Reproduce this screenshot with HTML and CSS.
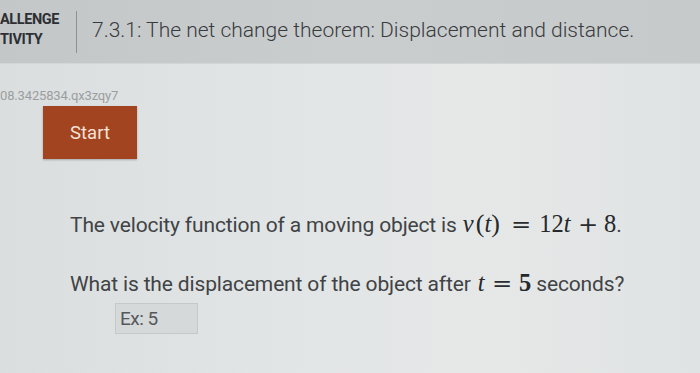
FILE: index.html
```html
<!DOCTYPE html>
<html>
<head>
<meta charset="utf-8">
<link rel="stylesheet" href="styles.css">
</head>
<body>
<header class="top">
  <div class="kind"><span>ALLENGE</span><span>TIVITY</span></div>
  <div class="divider"></div>
  <h1 class="title">7.3.1: The net change theorem: Displacement and distance.</h1>
</header>
<main class="content">
  <div class="code">08.3425834.qx3zqy7</div>
  <button class="start">Start</button>
  <p class="q q1">The velocity function of a moving object is <span class="m"><i class="v">v</i><span class="p">(</span><i>t</i><span class="p">)</span></span><span class="rel">=</span><span class="m">12<i>t</i></span><span class="op">+</span><span class="m">8</span>.</p>
  <p class="q q2">What is the displacement of the object after <span class="m t"><i>t</i></span><span class="rel">=</span><span class="m b">5</span> seconds?</p>
  <div class="answer">Ex: 5</div>
</main>
</body>
</html>
```
FILE: styles.css
```css
html, body { margin: 0; padding: 0; }
body {
  width: 700px; height: 373px; overflow: hidden;
  font-family: Roboto, "Liberation Sans", sans-serif;
  background: linear-gradient(90deg, #dbdede 0%, #e2e5e5 40%, #e6e8e8 70%, #e0e3e3 100%);
}
.top {
  height: 63px;
  display: flex; align-items: center;
  background: linear-gradient(90deg, #c4c7c8 0%, #cacdce 50%, #c7cacb 100%);
  border-bottom: 1px solid #d3d6d6;
}
.kind {
  display: flex; flex-direction: column;
  width: 76px;
  font-size: 14.5px; font-weight: 700; color: #2c2f33; line-height: 20px;
  letter-spacing: -0.4px;
  padding-bottom: 3px;
}
.divider { width: 1px; height: 42px; background: #8f9294; margin-right: 15px; }
.title {
  margin: 0; font-size: 21px; line-height: 25px; font-weight: 300; color: #383b3e;
  letter-spacing: 0; padding-bottom: 3px;
}
.code {
  font-size: 13px; line-height: 14px; color: #9b9ea0; padding-top: 25px;
  letter-spacing: -0.15px;
}
.start {
  display: block; margin: 3px 0 0 43px;
  width: 94px; height: 53px; border: none; padding: 0;
  background: #a2441f; color: #f3e2d8;
  font-family: Roboto, "Liberation Sans", sans-serif; font-size: 18.5px;
  box-shadow: 0 1px 2px rgba(0,0,0,.25);
}
.q {
  margin: 0 0 0 70px; font-size: 21px; line-height: 30px; color: #404346;
  letter-spacing: -0.15px; font-weight: 400;
}
.q1 { margin-top: 51px; }
.q2 { margin-top: 29px; }
.m {
  font-family: "Liberation Serif", "DejaVu Serif", serif; font-size: 24.5px;
  line-height: 1; color: #26292c; letter-spacing: 0;
}
.m i { font-style: italic; }
.m .v { margin-left: 1px; margin-right: 2px; }
.m .p { font-size: 26px; }
.b { font-weight: 700; }
.rel, .op {
  display: inline-block; font-family: "DejaVu Sans", sans-serif; font-size: 22px;
  line-height: 1; color: #2a2d30; letter-spacing: 0;
}
.rel { margin: 0 9px 0 12px; transform: scaleX(1.1); }
.op { margin: 0 7px 0 8px; transform: scaleX(1.1); }
.q2 .t { margin-left: 2px; }
.q2 .rel { margin: 0 8px 0 8px; }
.answer {
  margin: 4px 0 0 115px; width: 77px; height: 28px;
  padding: 1px 0 0 4px; box-sizing: content-box;
  background: #d6d9d9; border: 1px solid #c6c9c9;
  font-size: 19px; line-height: 27px; color: #55585b; letter-spacing: -0.5px;
}
```
